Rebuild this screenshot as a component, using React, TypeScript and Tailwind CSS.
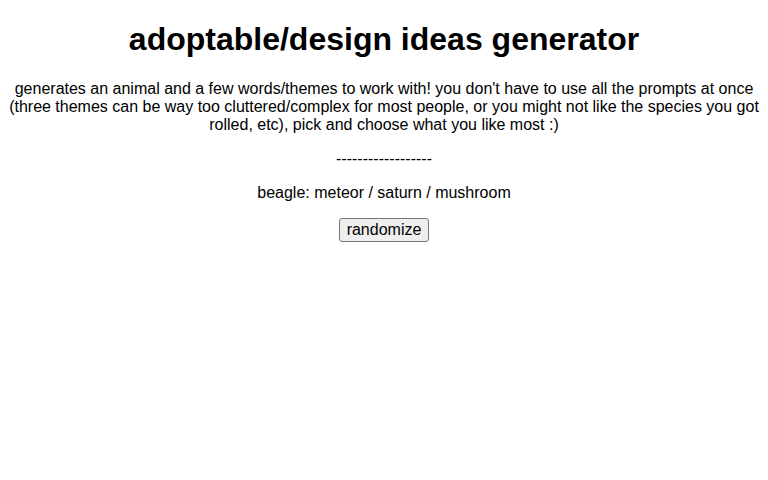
import { useState } from "react";

const animals = ["beagle", "fox", "raccoon", "axolotl", "moth", "deer"];
const themes = ["meteor", "saturn", "mushroom", "coral", "lantern", "frost", "honey", "ribbon"];

export default function App() {
  const [prompt, setPrompt] = useState("beagle: meteor / saturn / mushroom");

  const randomize = () => {
    const a = animals[Math.floor(Math.random() * animals.length)];
    const picks = [...themes].sort(() => Math.random() - 0.5).slice(0, 3);
    setPrompt(`${a}: ${picks.join(" / ")}`);
  };

  return (
    <div className="min-h-screen bg-white px-2 text-center text-[16px] text-black font-['Liberation_Sans',Arial,sans-serif] leading-[normal]">
      <h1 className="pt-[21px] text-[32px] font-bold leading-[normal]">adoptable/design ideas generator</h1>
      <p className="mt-[22px]">
        generates an animal and a few words/themes to work with! you don't have to use all the prompts at once
        (three themes can be way too cluttered/complex for most people, or you might not like the species you got
        rolled, etc), pick and choose what you like most :)
      </p>
      <p className="mt-4">------------------</p>
      <p className="mt-4">{prompt}</p>
      <div className="mt-[16px]">
        <button
          onClick={randomize}
          className="rounded-[3px] border border-[#767676] bg-[#efefef] px-[7px] py-[2px] text-[16px] leading-[normal] text-black hover:bg-[#e5e5e5]"
        >
          randomize
        </button>
      </div>
    </div>
  );
}
